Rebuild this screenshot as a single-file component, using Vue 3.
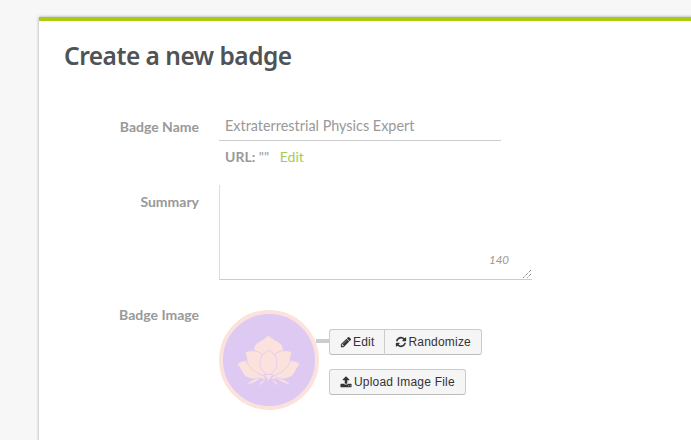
<template>
  <div class="page">
    <div class="card">
      <h1>Create a new badge</h1>

      <div class="row name-row">
        <label>Badge Name</label>
        <div class="field">
          <div class="name-input">Extraterrestrial Physics Expert</div>
          <div class="url"><b>URL:</b> "" <a>Edit</a></div>
        </div>
      </div>

      <div class="row summary-row">
        <label>Summary</label>
        <div class="summary">
          <span class="count">140</span>
          <svg class="grip" viewBox="0 0 10 10" width="10" height="10">
            <path d="M9 1 1 9M9 5 5 9" stroke="#555" stroke-width="1" stroke-dasharray="1 1" fill="none" />
          </svg>
        </div>
      </div>

      <div class="row image-row">
        <label>Badge Image</label>
        <div class="image-field">
          <svg class="badge" viewBox="0 0 100 100" width="100" height="100">
            <circle cx="50" cy="50" r="48" fill="#dec9f3" stroke="#fbe2dc" stroke-width="4" />
            <g fill="#fbe2dc" stroke="#dec9f3" stroke-width="0.8">
              <path d="M49.500 25C47 29 41 30 37 34 33 38 35 46 40 52L49.500 62 59 52C64 46 66 38 62 34 58 30 52 29 49.500 25Z" />
              <path d="M18 54C24 49 32 50 37 54 41 58 44 64 47 69 38 70 30 69 26 66 23 63 21 57 18 54Z" />
              <path d="M81 54C75 49 67 50 62 54 58 58 55 64 52 69 61 70 69 69 73 66 76 63 78 57 81 54Z" />
              <path d="M26 42C31 40 38 40 43 44 44 52 46 60 48 67 40 65 32 60 29 54 27 50 28 46 26 42Z" />
              <path d="M73 42C68 40 61 40 56 44 55 52 53 60 51 67 59 65 67 60 70 54 72 50 71 46 73 42Z" />
              <path d="M49.500 40C44 43 41 47 41 53 41 59 45 63 49.500 65 54 63 58 59 58 53 58 47 55 43 49.500 40Z" />
              <path d="M45 64.500H54L49.500 71Z" />
              <path d="M27 75C32 70 37 68 43 68 38 71 33 74 27 75Z" />
              <path d="M72 75C67 70 62 68 56 68 61 71 66 74 72 75Z" />
              <path d="M39 76C41 72 44 70 47 69 45 72 43 74 39 76Z" />
              <path d="M60 76C58 72 55 70 52 69 54 72 56 74 60 76Z" />
            </g>
          </svg>
          <div class="actions">
            <div class="btn-group">
              <button class="edit">
                <svg viewBox="0 0 1792 1792" width="12" height="12"><path d="M491 1536l91-91-235-235-91 91v107h128v128h107zm523-928q0-22-22-22-10 0-17 7l-542 542q-7 7-7 17 0 22 22 22 10 0 17-7l542-542q7-7 7-17zm-54-192l416 416-832 832h-416v-416zm683 96q0 53-37 90l-166 166-416-416 166-165q36-38 90-38 53 0 91 38l235 234q37 39 37 91z" /></svg>
                Edit
              </button>
              <button class="randomize">
                <svg viewBox="0 0 1792 1792" width="12" height="12"><path d="M1639 1056q0 5-1 7-64 268-268 434.500t-478 166.500q-146 0-282.500-55t-243.500-157l-129 129q-19 19-45 19t-45-19-19-45v-448q0-26 19-45t45-19h448q26 0 45 19t19 45-19 45l-137 137q71 66 161 102t187 36q134 0 250-65t186-179q11-17 53-117 8-23 30-23h192q13 0 22.500 9.500t9.500 22.500zm25-800v448q0 26-19 45t-45 19h-448q-26 0-45-19t-19-45 19-45l138-138q-148-137-349-137-134 0-250 65t-186 179q-11 17-53 117-8 23-30 23h-199q-13 0-22.500-9.500t-9.500-22.500v-7q65-268 270-434.500t480-166.500q146 0 284 55.500t245 156.500l130-129q19-19 45-19t45 19 19 45z" /></svg>
                Randomize
              </button>
            </div>
            <button class="upload">
              <svg viewBox="0 0 1792 1792" width="12" height="12"><path d="M1344 1472q0-26-19-45t-45-19-45 19-19 45 19 45 45 19 45-19 19-45zm256 0q0-26-19-45t-45-19-45 19-19 45 19 45 45 19 45-19 19-45zm128-224v320q0 40-28 68t-68 28h-1472q-40 0-68-28t-28-68v-320q0-40 28-68t68-28h427q21 56 70.500 92t110.500 36h256q61 0 110.500-36t70.500-92h427q40 0 68 28t28 68zm-325-648q-17 40-59 40h-256v448q0 26-19 45t-45 19h-256q-26 0-45-19t-19-45v-448h-256q-42 0-59-40-17-39 14-69l448-448q18-19 45-19t45 19l448 448q31 30 14 69z" /></svg>
              Upload Image File
            </button>
          </div>
        </div>
      </div>
    </div>
  </div>
</template>

<script setup>
</script>

<style>
html,
body {
  margin: 0;
  overflow: hidden;
}
</style>

<style scoped>
.page {
  height: 440px;
  overflow: hidden;
  background: #f7f7f7;
  padding: 17px 0 0 39px;
  box-sizing: border-box;
  font-family: "Lato", "Liberation Sans", sans-serif;
}

.card {
  width: 800px;
  height: 500px;
  box-sizing: border-box;
  background: #fff;
  border-top: 4px solid #aacc0f;
  padding: 0 0 0 25px;
  box-shadow: 0 0 3px rgba(0, 0, 0, 0.35);
}

h1 {
  margin: 0;
  padding-top: 18px;
  height: 64px;
  box-sizing: border-box;
  font-family: "Noto Sans", sans-serif;
  font-size: 24.5px;
  line-height: 34px;
  font-weight: 600;
  letter-spacing: -0.5px;
  color: #4f5356;
}

.row {
  display: flex;
}

label {
  width: 135px;
  margin-right: 20px;
  text-align: right;
  font-size: 14px;
  font-weight: 700;
  color: #999;
}

.name-row {
  padding-top: 30px;
}

.name-row label {
  line-height: 23px;
}

.name-input {
  width: 276px;
  height: 25px;
  padding-left: 6px;
  border-bottom: 1px solid #ccc;
  font-size: 14.4px;
  line-height: 22px;
  color: #999;
}

.url {
  margin-top: 7px;
  padding-left: 6px;
  font-size: 14px;
  line-height: 17px;
  color: #999;
}

.url a {
  margin-left: 7px;
  color: #a4cc55;
}

.summary-row {
  margin-top: 20px;
}

.summary-row label {
  line-height: 33px;
}

.summary {
  position: relative;
  width: 312px;
  height: 94px;
  border-left: 1px solid #ddd;
  border-bottom: 1px solid #ccc;
}

.count {
  position: absolute;
  right: 23px;
  bottom: 13px;
  font-size: 11.5px;
  font-style: italic;
  color: #999;
}

.grip {
  position: absolute;
  right: 0;
  bottom: 0;
}

.image-row {
  margin-top: 19px;
}

.image-row label {
  line-height: 33px;
  margin-top: -1px;
}

.image-field {
  display: flex;
  position: relative;
}

.badge {
  margin-top: 11px;
  display: block;
  margin-right: 10px;
}

.image-field::before {
  content: "";
  position: absolute;
  left: 97px;
  top: 40px;
  width: 13px;
  height: 4px;
  background: #ccc;
}

.actions {
  display: flex;
  flex-direction: column;
  align-items: flex-start;
  gap: 14px;
  padding-top: 30px;
}

.btn-group {
  display: flex;
}

button {
  display: flex;
  align-items: center;
  gap: 2px;
  height: 26px;
  padding: 0 10px;
  background: #f5f5f5;
  border: 1px solid #ccc;
  border-bottom-color: #bbb;
  border-radius: 3px;
  font-family: "Liberation Sans", Arial, sans-serif;
  font-size: 12px;
  letter-spacing: 0.2px;
  color: #333;
  white-space: nowrap;
}

button svg {
  fill: #333;
}

.btn-group button:first-child {
  border-radius: 3px 0 0 3px;
  border-right: 0;
}

.btn-group button:last-child {
  border-radius: 0 3px 3px 0;
}

.edit {
  gap: 1px;
}

.randomize {
  gap: 1px;
}
</style>
